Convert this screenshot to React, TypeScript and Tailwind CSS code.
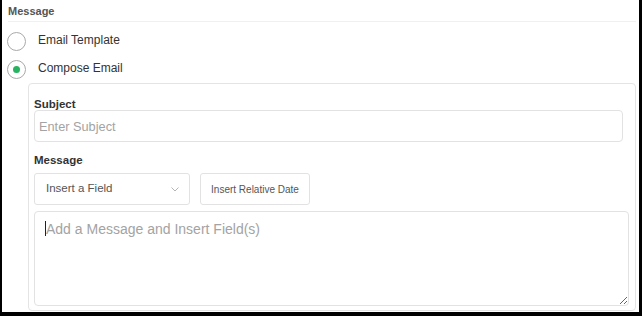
import React from "react";

function Radio({ checked, label }: { checked?: boolean; label: string }) {
  return (
    <div className="flex h-[28px] items-center">
      <div className="flex h-[19px] w-[19px] items-center justify-center rounded-full border border-[#a9a9a9] bg-white">
        {checked && <div className="h-[7px] w-[7px] rounded-full bg-[#27b35f]" />}
      </div>
      <span className="ml-[12px] pb-[3px] text-[12px] leading-[14px] text-[#333]">{label}</span>
    </div>
  );
}

export default function App() {
  return (
    <div className="h-[316px] w-[642px] bg-black pb-[4px] pl-[2px] pr-[3px]">
      <div className="flex h-full flex-col overflow-hidden bg-white font-['Liberation_Sans',Arial,sans-serif]">
        <div className="ml-[6px] mr-[3px] h-[22px] border-b border-[#f0f0f0] pt-[4px] text-[11px] font-bold leading-[14px] text-[#555]">
          Message
        </div>
        <div className="mt-[5px] pl-[5px]">
          <Radio label="Email Template" />
          <Radio checked label="Compose Email" />
        </div>
        <div className="mb-[1px] ml-[26px] mr-[3px] flex flex-1 flex-col rounded-[4px] border border-[#e4e4e4] px-[5px] pt-[14px]">
          <div className="text-[11.5px] font-bold leading-[12px] text-[#333]">Subject</div>
          <input
            className="h-[32px] w-[589px] rounded-[4px] border border-[#e2e2e2] px-[4px] text-[12.75px] text-[#333] outline-none placeholder:text-[#a3a3a3]"
            placeholder="Enter Subject"
          />
          <div className="mt-[12px] text-[11.5px] font-bold leading-[12px] text-[#333]">Message</div>
          <div className="mt-[7px] flex items-center">
            <div className="flex h-[32px] w-[156px] items-center justify-between rounded-[3px] border border-[#e2e2e2] pl-[11px] pr-[10px] text-[11.5px] text-[#555]">
              <span>Insert a Field</span>
              <svg width="8" height="5" viewBox="0 0 8 5" fill="none">
                <path d="M0.5 0.5 L4 4 L7.5 0.5" stroke="#b5b5b5" strokeWidth="1" />
              </svg>
            </div>
            <button className="ml-[10px] flex h-[32px] w-[110px] items-center justify-center rounded-[3px] border border-[#e2e2e2] bg-white text-[10px] text-[#555]">
              Insert Relative Date
            </button>
          </div>
          <div className="relative mt-[6px] w-[595px]">
            <textarea
              className="block h-[95px] w-[595px] rounded-[4px] border border-[#e2e2e2] pl-[11px] pt-[7px] text-[14px] leading-[20px] text-[#333] outline-none placeholder:text-[#a3a3a3]"
              placeholder="Add a Message and Insert Field(s)"
            />
            <span className="absolute left-[11px] top-[10px] h-[15px] w-[1px] bg-[#222]" />
          </div>
        </div>
      </div>
    </div>
  );
}
